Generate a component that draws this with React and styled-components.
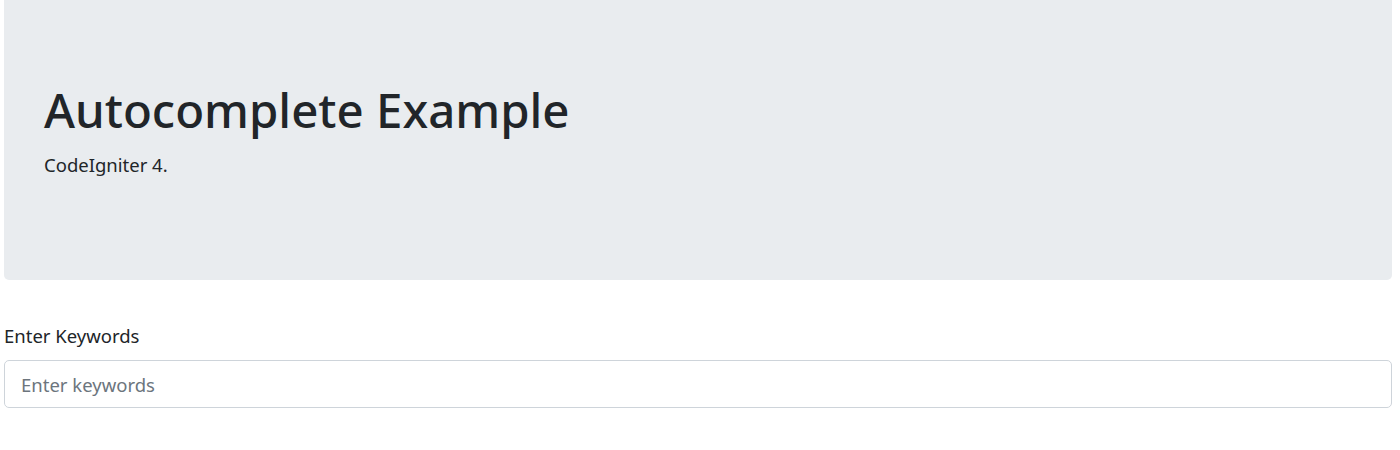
import styled, { createGlobalStyle } from "styled-components";

const GlobalStyle = createGlobalStyle`
  * {
    box-sizing: border-box;
  }

  body {
    margin: 0;
    background: #fff;
    color: #212529;
    font-family: "Noto Sans", "Open Sans", sans-serif;
    font-size: 18.5px;
    line-height: 1.5;
  }
`;

const Page = styled.div`
  padding: 0 8px 0 4px;
`;

const Jumbotron = styled.header`
  background-color: #e9ecef;
  border-radius: 0 0 5px 5px;
  padding: 82px 40px 101px;
  margin-bottom: 42px;
`;

const Title = styled.h1`
  margin: 0 0 12px;
  font-size: 47.4px;
  font-weight: 500;
  line-height: 1.2;
`;

const Lead = styled.p`
  margin: 0;
`;

const FormGroup = styled.div`
  display: flex;
  flex-direction: column;
  gap: 11px;
`;

const Label = styled.label`
  display: block;
`;

const Input = styled.input`
  width: 100%;
  height: 48px;
  padding: 0 16px;
  font: inherit;
  color: #495057;
  border: 1px solid #ced4da;
  border-radius: 5px;
  outline: none;

  &::placeholder {
    color: #6c757d;
  }
`;

function App() {
  return (
    <Page>
      <GlobalStyle />
      <Jumbotron>
        <Title>Autocomplete Example</Title>
        <Lead>CodeIgniter 4.</Lead>
      </Jumbotron>
      <FormGroup>
        <Label htmlFor="keywords">Enter Keywords</Label>
        <Input id="keywords" type="text" placeholder="Enter keywords" />
      </FormGroup>
    </Page>
  );
}

export default App;
